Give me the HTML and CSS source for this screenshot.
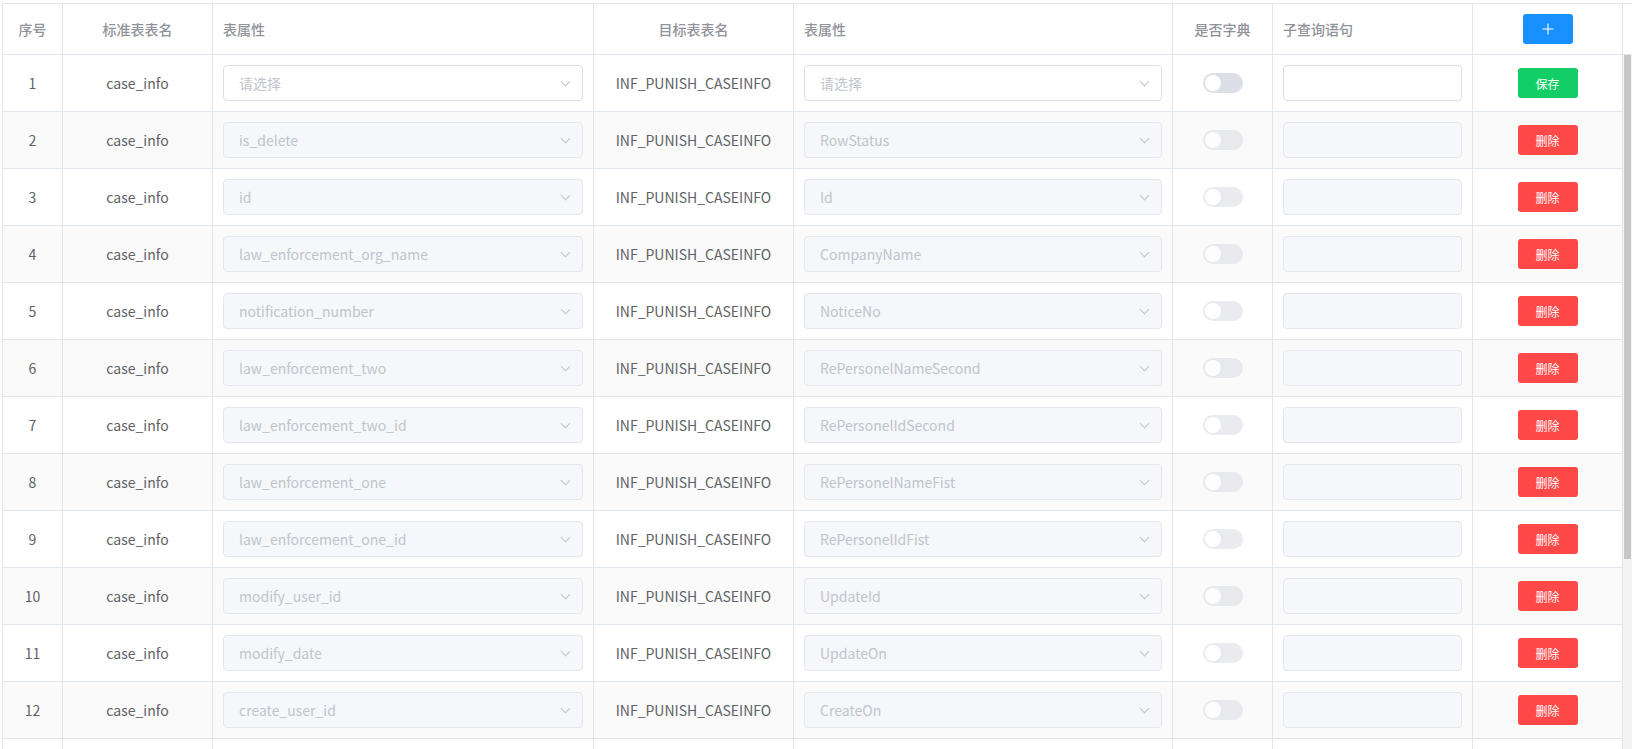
FILE: index.html
```html
<!doctype html>
<html lang="zh-CN">
  <head>
    <meta charset="UTF-8" />
    <meta name="viewport" content="width=device-width, initial-scale=1.0" />
    <title>字段映射</title>
    <link rel="stylesheet" href="styles.css">
  </head>
  <body>
    <main class="grid">
        <div class="grid-head">
            <div class="row head">
                <div class="cell center">序号</div>
                <div class="cell center">标准表表名</div>
                <div class="cell">表属性</div>
                <div class="cell center">目标表表名</div>
                <div class="cell">表属性</div>
                <div class="cell center">是否字典</div>
                <div class="cell">子查询语句</div>
                <div class="cell center">
                    <button type="button" class="btn btn-add" title="新增">
                        <svg width="12" height="12" viewBox="0 0 12 12"><path d="M6 0.5v11M0.5 6h11" stroke="#fff" stroke-width="1.1" fill="none"/></svg>
                    </button>
                </div>
                <div class="gutter"></div>
            </div>
        </div>

        <div class="grid-body">
            <div class="rows">
                <div class="row">
                    <div class="cell center">1</div>
                    <div class="cell center">case_info</div>
                    <div class="cell"><div class="select"><span class="placeholder">请选择</span><i class="arrow"></i></div></div>
                    <div class="cell center">INF_PUNISH_CASEINFO</div>
                    <div class="cell"><div class="select"><span class="placeholder">请选择</span><i class="arrow"></i></div></div>
                    <div class="cell center"><span class="switch"><span class="knob"></span></span></div>
                    <div class="cell"><input type="text" class="field"></div>
                    <div class="cell center"><button type="button" class="btn btn-save">保存</button></div>
                </div>
                <div class="row">
                    <div class="cell center">2</div>
                    <div class="cell center">case_info</div>
                    <div class="cell"><div class="select disabled"><span>is_delete</span><i class="arrow"></i></div></div>
                    <div class="cell center">INF_PUNISH_CASEINFO</div>
                    <div class="cell"><div class="select disabled"><span>RowStatus</span><i class="arrow"></i></div></div>
                    <div class="cell center"><span class="switch disabled"><span class="knob"></span></span></div>
                    <div class="cell"><input type="text" class="field" disabled></div>
                    <div class="cell center"><button type="button" class="btn btn-delete">删除</button></div>
                </div>
                <div class="row">
                    <div class="cell center">3</div>
                    <div class="cell center">case_info</div>
                    <div class="cell"><div class="select disabled"><span>id</span><i class="arrow"></i></div></div>
                    <div class="cell center">INF_PUNISH_CASEINFO</div>
                    <div class="cell"><div class="select disabled"><span>Id</span><i class="arrow"></i></div></div>
                    <div class="cell center"><span class="switch disabled"><span class="knob"></span></span></div>
                    <div class="cell"><input type="text" class="field" disabled></div>
                    <div class="cell center"><button type="button" class="btn btn-delete">删除</button></div>
                </div>
                <div class="row">
                    <div class="cell center">4</div>
                    <div class="cell center">case_info</div>
                    <div class="cell"><div class="select disabled"><span>law_enforcement_org_name</span><i class="arrow"></i></div></div>
                    <div class="cell center">INF_PUNISH_CASEINFO</div>
                    <div class="cell"><div class="select disabled"><span>CompanyName</span><i class="arrow"></i></div></div>
                    <div class="cell center"><span class="switch disabled"><span class="knob"></span></span></div>
                    <div class="cell"><input type="text" class="field" disabled></div>
                    <div class="cell center"><button type="button" class="btn btn-delete">删除</button></div>
                </div>
                <div class="row">
                    <div class="cell center">5</div>
                    <div class="cell center">case_info</div>
                    <div class="cell"><div class="select disabled"><span>notification_number</span><i class="arrow"></i></div></div>
                    <div class="cell center">INF_PUNISH_CASEINFO</div>
                    <div class="cell"><div class="select disabled"><span>NoticeNo</span><i class="arrow"></i></div></div>
                    <div class="cell center"><span class="switch disabled"><span class="knob"></span></span></div>
                    <div class="cell"><input type="text" class="field" disabled></div>
                    <div class="cell center"><button type="button" class="btn btn-delete">删除</button></div>
                </div>
                <div class="row">
                    <div class="cell center">6</div>
                    <div class="cell center">case_info</div>
                    <div class="cell"><div class="select disabled"><span>law_enforcement_two</span><i class="arrow"></i></div></div>
                    <div class="cell center">INF_PUNISH_CASEINFO</div>
                    <div class="cell"><div class="select disabled"><span>RePersonelNameSecond</span><i class="arrow"></i></div></div>
                    <div class="cell center"><span class="switch disabled"><span class="knob"></span></span></div>
                    <div class="cell"><input type="text" class="field" disabled></div>
                    <div class="cell center"><button type="button" class="btn btn-delete">删除</button></div>
                </div>
                <div class="row">
                    <div class="cell center">7</div>
                    <div class="cell center">case_info</div>
                    <div class="cell"><div class="select disabled"><span>law_enforcement_two_id</span><i class="arrow"></i></div></div>
                    <div class="cell center">INF_PUNISH_CASEINFO</div>
                    <div class="cell"><div class="select disabled"><span>RePersonelIdSecond</span><i class="arrow"></i></div></div>
                    <div class="cell center"><span class="switch disabled"><span class="knob"></span></span></div>
                    <div class="cell"><input type="text" class="field" disabled></div>
                    <div class="cell center"><button type="button" class="btn btn-delete">删除</button></div>
                </div>
                <div class="row">
                    <div class="cell center">8</div>
                    <div class="cell center">case_info</div>
                    <div class="cell"><div class="select disabled"><span>law_enforcement_one</span><i class="arrow"></i></div></div>
                    <div class="cell center">INF_PUNISH_CASEINFO</div>
                    <div class="cell"><div class="select disabled"><span>RePersonelNameFist</span><i class="arrow"></i></div></div>
                    <div class="cell center"><span class="switch disabled"><span class="knob"></span></span></div>
                    <div class="cell"><input type="text" class="field" disabled></div>
                    <div class="cell center"><button type="button" class="btn btn-delete">删除</button></div>
                </div>
                <div class="row">
                    <div class="cell center">9</div>
                    <div class="cell center">case_info</div>
                    <div class="cell"><div class="select disabled"><span>law_enforcement_one_id</span><i class="arrow"></i></div></div>
                    <div class="cell center">INF_PUNISH_CASEINFO</div>
                    <div class="cell"><div class="select disabled"><span>RePersonelIdFist</span><i class="arrow"></i></div></div>
                    <div class="cell center"><span class="switch disabled"><span class="knob"></span></span></div>
                    <div class="cell"><input type="text" class="field" disabled></div>
                    <div class="cell center"><button type="button" class="btn btn-delete">删除</button></div>
                </div>
                <div class="row">
                    <div class="cell center">10</div>
                    <div class="cell center">case_info</div>
                    <div class="cell"><div class="select disabled"><span>modify_user_id</span><i class="arrow"></i></div></div>
                    <div class="cell center">INF_PUNISH_CASEINFO</div>
                    <div class="cell"><div class="select disabled"><span>UpdateId</span><i class="arrow"></i></div></div>
                    <div class="cell center"><span class="switch disabled"><span class="knob"></span></span></div>
                    <div class="cell"><input type="text" class="field" disabled></div>
                    <div class="cell center"><button type="button" class="btn btn-delete">删除</button></div>
                </div>
                <div class="row">
                    <div class="cell center">11</div>
                    <div class="cell center">case_info</div>
                    <div class="cell"><div class="select disabled"><span>modify_date</span><i class="arrow"></i></div></div>
                    <div class="cell center">INF_PUNISH_CASEINFO</div>
                    <div class="cell"><div class="select disabled"><span>UpdateOn</span><i class="arrow"></i></div></div>
                    <div class="cell center"><span class="switch disabled"><span class="knob"></span></span></div>
                    <div class="cell"><input type="text" class="field" disabled></div>
                    <div class="cell center"><button type="button" class="btn btn-delete">删除</button></div>
                </div>
                <div class="row">
                    <div class="cell center">12</div>
                    <div class="cell center">case_info</div>
                    <div class="cell"><div class="select disabled"><span>create_user_id</span><i class="arrow"></i></div></div>
                    <div class="cell center">INF_PUNISH_CASEINFO</div>
                    <div class="cell"><div class="select disabled"><span>CreateOn</span><i class="arrow"></i></div></div>
                    <div class="cell center"><span class="switch disabled"><span class="knob"></span></span></div>
                    <div class="cell"><input type="text" class="field" disabled></div>
                    <div class="cell center"><button type="button" class="btn btn-delete">删除</button></div>
                </div>
                <!-- next row, only its top edge is in view -->
                <div class="row">
                    <div class="cell"></div>
                    <div class="cell"></div>
                    <div class="cell"></div>
                    <div class="cell"></div>
                    <div class="cell"></div>
                    <div class="cell"></div>
                    <div class="cell"></div>
                    <div class="cell"></div>
                </div>
            </div>
            <div class="scrollbar"><div class="thumb"></div></div>
        </div>
    </main>
  </body>
</html>
```

FILE: styles.css
```css
:root {
    font-family: "Noto Sans CJK SC", "Noto Sans", sans-serif;
    font-size: 14px;
    color: #606266;
    background-color: #fff;
}

* {
    box-sizing: border-box;
}

body {
    margin: 0;
    height: 100vh;
    overflow: hidden;
}

.grid {
    display: block;
    width: 1630px;
    margin: 3px 0 0 2px;
    border-left: 1px solid #dfe6ec;
    border-top: 1px solid #dfe6ec;
}

.row {
    display: grid;
    grid-template-columns: 60px 150px 381px 200px 379px 100px 200px 150px;
}

.row.head {
    grid-template-columns: 60px 150px 381px 200px 379px 100px 200px 150px 9px;
}

.rows .row:nth-child(even) {
    background-color: #fafafa;
}

.cell {
    display: flex;
    align-items: center;
    height: 57px;
    padding: 0 10px;
    border-right: 1px solid #dfe6ec;
    border-bottom: 1px solid #dfe6ec;
    white-space: nowrap;
}

.cell.center {
    justify-content: center;
}

.head .cell {
    height: 51px;
    color: #909399;
    font-weight: 500;
}

.gutter {
    border-bottom: 1px solid #dfe6ec;
}

/* body with its scrollbar track */
.grid-body {
    display: flex;
    height: 694px;
    overflow: hidden;
}

.rows {
    width: 1620px;
    flex: none;
}

.scrollbar {
    width: 9px;
    flex: none;
    padding-left: 1px;
    background-color: #f4f4f4;
}

.thumb {
    width: 7px;
    height: 504px;
    background-color: #c6c6c6;
}

/* select */
.select {
    display: flex;
    align-items: center;
    justify-content: space-between;
    width: 100%;
    height: 36px;
    padding: 0 11px 0 15px;
    border: 1px solid #dcdfe6;
    border-radius: 4px;
    background-color: #fff;
    color: #606266;
}

.select .placeholder {
    color: #c0c4cc;
}

.select.disabled {
    background-color: #f5f7fa;
    border-color: #e4e7ed;
    color: #c0c4cc;
}

.arrow {
    width: 7px;
    height: 7px;
    margin: 0 2px 4px 0;
    border-right: 1px solid #c0c4cc;
    border-bottom: 1px solid #c0c4cc;
    transform: rotate(45deg);
}

/* switch */
.switch {
    display: inline-flex;
    align-items: center;
    width: 40px;
    height: 20px;
    padding: 2px;
    border-radius: 10px;
    background-color: #dcdfe6;
}

.switch .knob {
    width: 16px;
    height: 16px;
    border-radius: 50%;
    background-color: #fff;
}

.switch.disabled {
    opacity: 0.6;
}

/* input */
.field {
    width: 100%;
    height: 36px;
    padding: 0 15px;
    border: 1px solid #dcdfe6;
    border-radius: 4px;
    background-color: #fff;
    font: inherit;
    color: #606266;
    outline: none;
}

.field:disabled {
    background-color: #f5f7fa;
    border-color: #e4e7ed;
}

/* buttons */
.btn {
    display: inline-flex;
    align-items: center;
    justify-content: center;
    height: 30px;
    padding: 0;
    border: none;
    border-radius: 3px;
    color: #fff;
    font-family: inherit;
    font-size: 12px;
    cursor: pointer;
}

.btn-add {
    width: 50px;
    background-color: #1890ff;
}

.btn-save {
    width: 60px;
    background-color: #13ce66;
}

.btn-delete {
    width: 60px;
    background-color: #ff4949;
}
```
